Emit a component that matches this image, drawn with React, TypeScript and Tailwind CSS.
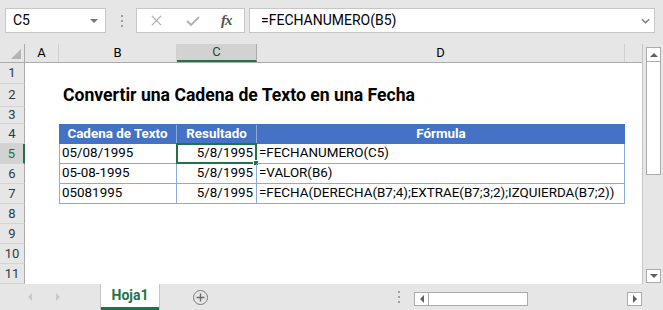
import type { ReactNode } from "react";

const font = "font-['Roboto','Liberation_Sans',sans-serif]";

// column widths: row header, A, B, C, D, rest
const cols = ["w-[25px]", "w-[34px]", "w-[118px]", "w-[80px]", "w-[368px]", "w-[18px]"];

const rowHeights: Record<number, string> = {
  1: "h-[21px]",
  2: "h-[23px]",
  3: "h-[17px]",
};

const tbl = "border-[#8eaadb]";

function RowHead({ n, active }: { n: number; active?: boolean }) {
  return (
    <div
      className={`${cols[0]} shrink-0 flex items-center justify-center text-[13px] border-b border-[#d4d4d4] ${
        active
          ? "bg-[#d2d2d2] text-[#217346] border-r-2 border-r-[#217346]"
          : "bg-[#e6e6e6] text-[#2b3a4a] border-r border-r-[#ababab]"
      }`}
    >
      {n}
    </div>
  );
}

function Cell({
  w,
  children,
  className = "",
}: {
  w: string;
  children?: ReactNode;
  className?: string;
}) {
  return <div className={`${w} shrink-0 relative flex items-center ${className}`}>{children}</div>;
}

function DataRow({
  n,
  a,
  b,
  c,
  active,
}: {
  n: number;
  a: string;
  b: string;
  c: string;
  active?: boolean;
}) {
  return (
    <div className="flex h-5 text-[13.4px]">
      <RowHead n={n} active={active} />
      <Cell w={cols[1]} />
      <Cell w={cols[2]} className={`border-l border-b border-r ${tbl} pl-[2px]`}>
        {a}
      </Cell>
      <Cell w={cols[3]} className={`border-b border-r ${tbl} justify-end pr-[3px]`}>
        {b}
        {active && (
          <div className="absolute -left-[1px] -top-[1px] -right-[1px] -bottom-[1px] border-2 border-[#217346]">
            <div className="absolute -right-[4px] -bottom-[4px] w-[6px] h-[6px] bg-[#217346] border border-white" />
          </div>
        )}
      </Cell>
      <Cell w={cols[4]} className={`border-b border-r ${tbl} pl-[2px] whitespace-nowrap`}>
        {c}
      </Cell>
      <Cell w={cols[5]} />
    </div>
  );
}

function EmptyRow({ n, h = "h-5", children }: { n: number; h?: string; children?: ReactNode }) {
  return (
    <div className={`flex ${h}`}>
      <RowHead n={n} />
      <Cell w={cols[1]} />
      <Cell w={cols[2]} className="overflow-visible">
        {children}
      </Cell>
    </div>
  );
}

function Tri({ dir, className = "" }: { dir: "up" | "down" | "left" | "right"; className?: string }) {
  const pts = {
    up: "0,5 4,1 8,5",
    down: "0,1 4,5 8,1",
    left: "5,0 1,4 5,8",
    right: "1,0 5,4 1,8",
  }[dir];
  const vb = dir === "up" || dir === "down" ? "0 0 8 6" : "0 0 6 8";
  const size = dir === "up" || dir === "down" ? "w-[8px] h-[6px]" : "w-[6px] h-[8px]";
  return (
    <svg viewBox={vb} className={`${size} ${className}`}>
      <polygon points={pts} fill="currentColor" />
    </svg>
  );
}

function Dots({ className = "" }: { className?: string }) {
  return (
    <div className={`flex flex-col gap-[3px] ${className}`}>
      <div className="w-[2px] h-[2px] bg-[#a0a0a0]" />
      <div className="w-[2px] h-[2px] bg-[#a0a0a0]" />
      <div className="w-[2px] h-[2px] bg-[#a0a0a0]" />
    </div>
  );
}

export default function App() {
  return (
    <div className={`w-[663px] h-[310px] bg-[#e6e6e6] overflow-hidden flex flex-col ${font} text-[13px] text-black`}>
      {/* formula bar */}
      <div className="h-[44px] flex items-start pt-[8px] pl-[5px]">
        <div className="w-[101px] h-[25px] bg-white border border-[#c6c6c6] flex items-center pl-[7px] pr-[7px] justify-between">
          <span className="text-[14px]">C5</span>
          <Tri dir="down" className="text-[#777]" />
        </div>
        <Dots className="ml-[15px] mt-[7px]" />
        <div className="ml-[13px] w-[109px] h-[25px] bg-white border border-[#c6c6c6] flex items-center">
          <svg viewBox="0 0 12 12" className="w-[11px] h-[11px] ml-[14px]">
            <path d="M1 1 L11 11 M11 1 L1 11" stroke="#b0b0b0" strokeWidth="1.4" fill="none" />
          </svg>
          <svg viewBox="0 0 14 12" className="w-[14px] h-[12px] ml-[24px]">
            <path d="M1 6 L5 10 L13 2" stroke="#b0b0b0" strokeWidth="1.8" fill="none" />
          </svg>
          <span className="ml-[21px] font-['Liberation_Serif',serif] italic font-bold text-[15px] text-[#555] tracking-[-1px]">
            fx
          </span>
        </div>
        <div className="ml-[4px] w-[406px] h-[25px] bg-white border border-[#c6c6c6] flex items-center pl-[11px] pr-[4px] justify-between">
          <span className="text-[14px]">=FECHANUMERO(B5)</span>
          <svg viewBox="0 0 10 6" className="w-[9px] h-[6px]">
            <path d="M1 1 L5 5 L9 1" stroke="#777" strokeWidth="1.5" fill="none" />
          </svg>
        </div>
      </div>

      {/* grid + vertical scroll */}
      <div className="flex h-[240px]">
        <div className="w-[643px] flex flex-col border-r border-[#c6c6c6] border-b">
          {/* column headers */}
          <div className="flex h-[19px] bg-[#e6e6e6] border-b border-[#ababab]">
            <div className={`${cols[0]} shrink-0 relative border-r border-[#ababab]`}>
              <svg viewBox="0 0 10 10" className="absolute right-[3px] bottom-[3px] w-[10px] h-[10px]">
                <polygon points="10,0 10,10 0,10" fill="#b4b4b4" />
              </svg>
            </div>
            {["A", "B", "C", "D"].map((l, i) => (
              <div
                key={l}
                className={`${cols[i + 1]} shrink-0 flex items-center justify-center ${
                  l === "C"
                    ? "bg-[#d2d2d2] text-[#1d4d33] border-b-2 border-[#217346] border-r border-r-[#ababab]"
                    : "border-r border-[#d0d0d0]"
                }`}
              >
                {l}
              </div>
            ))}
            <div className="flex-1" />
          </div>

          <div className="flex-1 bg-white flex flex-col">
            <EmptyRow n={1} h={rowHeights[1]} />
            <EmptyRow n={2} h={rowHeights[2]}>
              <span className="absolute left-[4px] whitespace-nowrap font-bold text-[17.6px]">
                Convertir una Cadena de Texto en una Fecha
              </span>
            </EmptyRow>
            <EmptyRow n={3} h={rowHeights[3]} />

            {/* table header */}
            <div className="flex h-5 text-[13.4px]">
              <RowHead n={4} />
              <Cell w={cols[1]} />
              <div className="flex bg-[#4472c4] text-white font-bold border-t border-[#4472c4]">
                <div className={`${cols[2]} flex items-center justify-center border-r border-[#8eaadb]`}>
                  Cadena de Texto
                </div>
                <div className={`${cols[3]} flex items-center justify-center border-r border-[#8eaadb]`}>
                  Resultado
                </div>
                <div className={`${cols[4]} flex items-center justify-center`}>Fórmula</div>
              </div>
            </div>
            <DataRow n={5} a="05/08/1995" b="5/8/1995" c="=FECHANUMERO(C5)" active />
            <DataRow n={6} a="05-08-1995" b="5/8/1995" c="=VALOR(B6)" />
            <DataRow
              n={7}
              a="05081995"
              b="5/8/1995"
              c="=FECHA(DERECHA(B7;4);EXTRAE(B7;3;2);IZQUIERDA(B7;2))"
            />
            <EmptyRow n={8} />
            <EmptyRow n={9} />
            <EmptyRow n={10} />
            <EmptyRow n={11} />
          </div>
        </div>

        {/* vertical scrollbar */}
        <div className="w-[20px] flex flex-col items-center pt-[3px] pb-[1px] pl-[1px]">
          <div className="w-[15px] h-[15px] bg-white border border-[#ababab] flex items-center justify-center text-[#606060]">
            <Tri dir="up" />
          </div>
          <div className="w-[15px] h-[113px] bg-white border border-[#ababab] border-t-0" />
          <div className="flex-1" />
          <div className="w-[15px] h-[14px] bg-white border border-[#ababab] flex items-center justify-center text-[#606060]">
            <Tri dir="down" />
          </div>
        </div>
      </div>

      {/* sheet tabs */}
      <div className="flex-1 flex items-stretch">
        <div className="flex items-center gap-[22px] pl-[27px] w-[100px] text-[#c8c8c8]">
          <Tri dir="left" />
          <Tri dir="right" />
        </div>
        <div className="w-[60px] bg-white border-x border-[#c6c6c6] flex flex-col">
          <div className="flex-1 flex items-center justify-center font-bold text-[14px] text-[#217346]">Hoja1</div>
          <div className="h-[3px] bg-[#217346]" />
        </div>
        <div className="ml-[33px] flex items-center">
          <div className="w-[15px] h-[15px] rounded-full border border-[#7a7a7a] flex items-center justify-center">
            <svg viewBox="0 0 9 9" className="w-[9px] h-[9px]">
              <path d="M4.5 0.5 V8.5 M0.5 4.5 H8.5" stroke="#6a6a6a" strokeWidth="1.4" />
            </svg>
          </div>
        </div>
        <Dots className="ml-[190px] self-center" />
        <div className="ml-[14px] mt-[8px] h-[14px] flex">
          <div className="w-[15px] h-[14px] bg-white border border-[#ababab] flex items-center justify-center text-[#606060]">
            <Tri dir="left" />
          </div>
          <div className="w-[99px] h-[14px] bg-white border-y border-r border-[#ababab]" />
          <div className="w-[99px] h-[14px]" />
          <div className="w-[15px] h-[14px] bg-white border border-[#ababab] flex items-center justify-center text-[#606060]">
            <Tri dir="right" />
          </div>
        </div>
      </div>
    </div>
  );
}
